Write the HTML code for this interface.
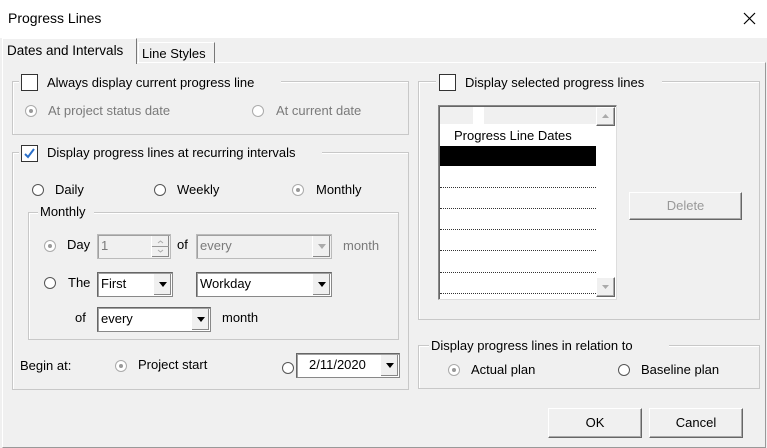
<!DOCTYPE html>
<html><head><style>
body{margin:0;width:767px;height:448px;background:#f0f0f0;font-family:"Liberation Sans",sans-serif;font-size:13px;color:#000;position:relative;overflow:hidden}
.a{position:absolute;white-space:nowrap}
.g{position:absolute;border:1px solid #c8c8c8;box-shadow:inset 1px 1px 0 #fff}
.cb{position:absolute;width:15px;height:15px;border:1px solid #333;background:#fff}
.r{position:absolute;width:10px;height:10px;border:1px solid #555;border-radius:50%;background:#fff}
.r.d{border-color:#aaa}
.r.s::after{content:"";position:absolute;left:3px;top:3px;width:4px;height:4px;border-radius:50%;background:#555}
.r.d.s::after{background:#999}
.gr{color:#7a7a7a}
.cmb{position:absolute;background:#fff;border:1px solid #888;border-top-color:#666;border-left-color:#666;box-shadow:inset 1px 1px 0 #a0a0a0}
.cmb span{position:absolute;left:3px;top:3px}
.cmb i{position:absolute;right:1px;top:1px;bottom:1px;width:17px;background:#f0f0f0;border-left:1px solid #fff;box-shadow:inset -1px -1px 0 #888}
.cmb i::after{content:"";position:absolute;left:5px;top:8px;border:4px solid transparent;border-top:5px solid #000;border-bottom:0}
.cmb.dis{background:#f0f0f0;border-color:#bbb}
.cmb.dis i::after{border-top-color:#aaa}
.cmb i.sp::after{display:none}
.btn{position:absolute;background:#f0f0f0;border:1px solid #fff;border-right-color:#666;border-bottom-color:#666;box-shadow:inset -1px -1px 0 #aaa;text-align:center}
.bg{background:#f0f0f0}
</style></head><body>
<div class="a" style="left:0;top:0;width:767px;height:38px;background:#fff"></div>
<div class="a" style="left:8px;top:10px;font-size:14px">Progress Lines</div>
<svg class="a" style="left:743px;top:12px" width="13" height="13"><path d="M1 1L12 12M12 1L1 12" stroke="#000" stroke-width="1.2"/></svg>
<div class="a" style="left:2px;top:62px;width:762px;height:384px;border:1px solid #fff;border-right-color:#999;border-bottom-color:#999"></div>
<div class="a" style="left:2px;top:38px;width:133px;height:25px;border:1px solid #fff;border-right-color:#777;border-bottom:none;background:#f0f0f0"></div>
<div class="a" style="left:7px;top:43px;font-size:13.5px">Dates and Intervals</div>
<div class="a" style="left:138px;top:42px;width:75px;height:20px;border:1px solid #fff;border-right-color:#777;border-bottom:none"></div>
<div class="a" style="left:142px;top:46px">Line Styles</div>

<div class="g" style="left:12px;top:81px;width:395px;height:52px"></div>
<div class="a bg" style="left:19px;top:74px;width:262px;height:16px"></div>
<div class="cb" style="left:21px;top:74px"></div>
<div class="a" style="left:47px;top:75px">Always display current progress line</div>
<div class="r d s" style="left:25px;top:105px"></div><div class="a gr" style="left:48px;top:103px">At project status date</div>
<div class="r d" style="left:252px;top:105px"></div><div class="a gr" style="left:276px;top:103px">At current date</div>

<div class="g" style="left:12px;top:152px;width:395px;height:236px"></div>
<div class="a bg" style="left:19px;top:145px;width:303px;height:16px"></div>
<div class="cb" style="left:21px;top:145px"></div>
<svg class="a" style="left:22px;top:146px" width="15" height="15"><path d="M3 8L6 11L12 3" stroke="#2a6fc9" stroke-width="2" fill="none"/></svg>
<div class="a" style="left:47px;top:145px">Display progress lines at recurring intervals</div>
<div class="r" style="left:32px;top:184px"></div><div class="a" style="left:55px;top:182px">Daily</div>
<div class="r" style="left:154px;top:184px"></div><div class="a" style="left:177px;top:182px">Weekly</div>
<div class="r d s" style="left:292px;top:184px"></div><div class="a" style="left:316px;top:182px">Monthly</div>

<div class="g" style="left:28px;top:212px;width:369px;height:126px"></div>
<div class="a bg" style="left:38px;top:204px;width:56px;height:16px"></div>
<div class="a" style="left:40px;top:204px">Monthly</div>
<div class="r d s" style="left:44px;top:240px"></div><div class="a" style="left:67px;top:237px">Day</div>
<div class="cmb dis" style="left:97px;top:234px;width:72px;height:23px"><span class="gr">1</span><i class="sp"><svg width="17" height="21" style="position:absolute;left:0;top:0"><path d="M0 10.5H17" stroke="#999"/><path d="M6 7L8.5 5L11 7M6 14L8.5 16L11 14" stroke="#aaa" fill="none"/></svg></i></div>
<div class="a" style="left:177px;top:237px">of</div>
<div class="cmb dis" style="left:196px;top:234px;width:134px;height:23px"><span class="gr">every</span><i></i></div>
<div class="a gr" style="left:343px;top:238px">month</div>
<div class="r" style="left:44px;top:277px"></div><div class="a" style="left:68px;top:275px">The</div>
<div class="cmb" style="left:97px;top:272px;width:74px;height:23px"><span>First</span><i></i></div>
<div class="cmb" style="left:196px;top:272px;width:134px;height:23px"><span>Workday</span><i></i></div>
<div class="a" style="left:75px;top:310px">of</div>
<div class="cmb" style="left:97px;top:307px;width:112px;height:23px"><span>every</span><i></i></div>
<div class="a" style="left:222px;top:310px">month</div>
<div class="a" style="left:20px;top:358px">Begin at:</div>
<div class="r d s" style="left:115px;top:360px"></div><div class="a" style="left:138px;top:357px">Project start</div>
<div class="r" style="left:282px;top:362px"></div>
<div class="cmb" style="left:296px;top:353px;width:102px;height:23px"><span style="left:12px">2/11/2020</span><i></i></div>

<div class="g" style="left:418px;top:81px;width:340px;height:237px"></div>
<div class="a bg" style="left:436px;top:74px;width:226px;height:16px"></div>
<div class="cb" style="left:439px;top:74px"></div>
<div class="a" style="left:465px;top:75px">Display selected progress lines</div>
<div class="a" style="left:438px;top:105px;width:177px;height:193px;background:#fff;border:1px solid #888;border-right-color:#ddd;border-bottom-color:#ddd;box-shadow:inset 1px 1px 0 #666"></div>
<div class="a" style="left:440px;top:107px;width:33px;height:17px;background:#f0f0f0"></div>
<div class="a" style="left:484px;top:107px;width:112px;height:17px;background:#f0f0f0"></div>
<div class="a" style="left:454px;top:128px">Progress Line Dates</div>
<div class="a" style="left:440px;top:146px;width:156px;height:20px;background:#000"></div>
<div class="a" style="left:440px;top:187px;width:156px;border-top:1px dotted #333"></div>
<div class="a" style="left:440px;top:208px;width:156px;border-top:1px dotted #333"></div>
<div class="a" style="left:440px;top:229px;width:156px;border-top:1px dotted #333"></div>
<div class="a" style="left:440px;top:250px;width:156px;border-top:1px dotted #333"></div>
<div class="a" style="left:440px;top:272px;width:156px;border-top:1px dotted #333"></div>
<div class="a" style="left:440px;top:293px;width:156px;border-top:1px dotted #333"></div>
<div class="btn" style="left:596px;top:107px;width:17px;height:17px"><svg width="17" height="17"><path d="M5 10L8.5 6L12 10Z" fill="#aaa"/></svg></div>
<div class="btn" style="left:596px;top:277px;width:17px;height:18px"><svg width="17" height="17"><path d="M5 7L8.5 11L12 7Z" fill="#aaa"/></svg></div>
<div class="btn gr" style="left:629px;top:192px;width:111px;height:26px;line-height:26px;color:#999">Delete</div>

<div class="g" style="left:418px;top:345px;width:340px;height:42px"></div>
<div class="a bg" style="left:429px;top:338px;width:240px;height:16px"></div>
<div class="a" style="left:431px;top:338px">Display progress lines in relation to</div>
<div class="r d s" style="left:448px;top:364px"></div><div class="a" style="left:471px;top:362px">Actual plan</div>
<div class="r" style="left:618px;top:364px"></div><div class="a" style="left:641px;top:362px">Baseline plan</div>

<div class="btn" style="left:548px;top:408px;width:92px;height:28px;line-height:28px">OK</div>
<div class="btn" style="left:649px;top:408px;width:92px;height:28px;line-height:28px">Cancel</div>
</body></html>
